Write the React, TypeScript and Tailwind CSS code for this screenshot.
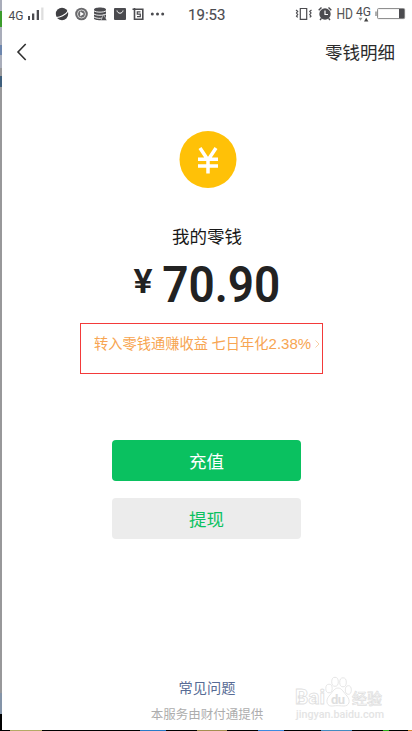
function StatusBar() {
  return (
    <header className="flex h-7 items-center text-[#4b4b4f]">
      <svg className="w-[410px] h-7 shrink-0" viewBox="2 0 410 28" fill="none">
        <text x="8.5" y="20" fontSize="12.500" fill="#4b4b4f" textLength="15" lengthAdjust="spacingAndGlyphs">4G</text>
        <path d="M28 16h2v4h-2zM32 13.500h2.300v6.500H32zM36.700 10h2.300v10h-2.300z" fill="#4b4b4f" />
        <path d="M41.200 7.500h2.300v12.500h-2.300z" fill="#dedede" />

        {/* planet */}
        <circle cx="62" cy="14" r="6.200" fill="#3f3f43" />
        <path d="M55.500 17.500c4 .5 10.500-2.700 13-7" stroke="#fff" strokeWidth="1.100" />
        {/* player */}
        <circle cx="81.500" cy="14" r="6.300" fill="#6a6a6d" />
        <circle cx="81.500" cy="14" r="4" stroke="#ddd" strokeWidth="0.900" />
        <path d="M80.200 11.600v4.600l3.700-2.300z" fill="#fff" />
        {/* database */}
        <path d="M94 9.500c0-2.700 12-2.700 12 0v9c0 2.300-12 2.300-12 0z" fill="#4b4b4f" />
        <path d="M94 10.800c2 1.800 10 1.800 12 0M94 14c2 1.700 10 1.700 12 0M94 17c2 1.500 7 1.600 8 1" stroke="#fff" strokeWidth="0.900" />
        <path d="M103.500 14.500l3.500 6h-6z" fill="#4b4b4f" stroke="#fff" strokeWidth="0.500" />
        {/* shopping bag */}
        <rect x="114" y="8" width="12" height="12" rx="1" fill="#4b4b4f" />
        <path d="M117 10.500c.5 3.600 5.500 3.600 6 0" stroke="#fff" />
        {/* framed S */}
        <path d="M132.500 9.200h10.300v10h-8.300V8" stroke="#4b4b4f" strokeWidth="1.600" />
        <path d="M140.500 11.800h-3.200v2.400h3v2.500h-3.300" stroke="#4b4b4f" strokeWidth="1.200" />
        <g fill="#4b4b4f">
          <circle cx="152.300" cy="14" r="1.500" />
          <circle cx="157.500" cy="14" r="1.500" />
          <circle cx="162.700" cy="14" r="1.500" />
        </g>

        <text x="188" y="20" fontSize="15" fill="#4b4b4f" stroke="#4b4b4f" strokeWidth="0.150" textLength="37.500">19:53</text>

        {/* vibrate */}
        <path d="M300.300 8.500h6.400v10.800h-6.400zM296 10l1.700 1.300-1.200 1.700 1.200 1.500-1.200 1.600 1.200 1.300M311.500 10l-1.700 1.300 1.200 1.700-1.200 1.500 1.200 1.600-1.200 1.300" stroke="#4b4b4f" strokeWidth="1.200" />
        {/* alarm */}
        <circle cx="325" cy="14" r="5.700" fill="#4b4b4f" />
        <path d="M325 10.500v4h3" stroke="#fff" strokeWidth="1.200" />
        <path d="M318.700 10.200l2.800-2.800M331.300 10.200l-2.800-2.800M321.500 18.300l-1.500 1.700M328.500 18.300l1.500 1.700" stroke="#4b4b4f" strokeWidth="1.400" />
        <text x="336.500" y="19" fontSize="15" fill="#555" textLength="16.500" lengthAdjust="spacingAndGlyphs">HD</text>
        <text x="356" y="16.300" fontSize="13" fill="#4b4b4f" textLength="15" lengthAdjust="spacingAndGlyphs">4G</text>
        <path d="M358.500 17.800h4l-2 3z" fill="#999" />
        <path d="M364 21.500h4.400l-2.200-3.700z" fill="#444" />
        {/* battery */}
        <rect x="377.600" y="8.600" width="27" height="10" rx="0.800" stroke="#858585" />
        <path d="M399 9h5.200v9.200H399z" fill="#4b4b4f" />
        <path d="M376 11.500v4.500" stroke="#858585" strokeWidth="1.300" />
      </svg>
    </header>
  );
}

function NavBar() {
  return (
    <nav className="flex h-12 items-center justify-between pl-[14px] pr-[17px] text-[#2b2b2b]">
      <svg className="h-[18px] w-3" viewBox="0 0 12 18" fill="none">
        <path d="M9.700 1L2 9l7.700 8" stroke="#303030" strokeWidth="1.600" />
      </svg>
      <span className="pt-1 text-[17.5px] leading-none">零钱明细</span>
    </nav>
  );
}

function Watermark() {
  return (
    <svg className="absolute bottom-0 right-5 h-14 w-[100px]" viewBox="292 675 100 56" fill="#fff" stroke="#dfdfdf" strokeWidth="0.800">
      <text x="295" y="704" fontSize="19.500" fontWeight="700" textLength="30" lengthAdjust="spacingAndGlyphs">Bai</text>
      <ellipse cx="329" cy="688.500" rx="3.200" ry="4.300" />
      <ellipse cx="335" cy="681.800" rx="3.300" ry="4.500" />
      <ellipse cx="343" cy="682.300" rx="3.300" ry="4.500" />
      <ellipse cx="348.300" cy="690" rx="3" ry="4.300" />
      <path d="M338 688c4 0 6 5 9 8 4 5 2 10-3 10-3 0-8-.8-11 0-6 1-8-5-4-10 3-3 5-8 9-8z" />
      <text x="331" y="703.500" fontSize="13" fontWeight="700" fill="#dedede" stroke="none" textLength="14">du</text>
      <text x="352" y="704" fontSize="15" fontWeight="500" fill="#f7f7f7" strokeWidth="0.700" textLength="30">经验</text>
      <text x="296" y="717.500" fontSize="10" fontWeight="500" fill="#e4e4e4" stroke="none" textLength="88" lengthAdjust="spacingAndGlyphs">jingyan.baidu.com</text>
    </svg>
  );
}

export default function App() {
  return (
    <div className="relative flex h-[731px] w-[412px] overflow-hidden bg-white font-[Roboto,'Noto_Sans_CJK_SC',sans-serif]">
      <aside className="flex w-[2px] shrink-0 flex-col bg-[#98989a]">
        <div className="h-[11px] bg-[#a9adba]" />
        <div className="h-4 bg-[#3c9c2c]" />
        <div className="h-[18px] bg-[#a9adba]" />
        <div className="h-[10px] bg-[#6d86ad]" />
        <div className="h-[13px] bg-[#a9adba]" />
        <div className="mt-2 h-[11px] bg-[#3f5f7c]" />
        <div className="mt-auto h-[21px] bg-[#8494a8]" />
        <div className="h-[17px] bg-black" />
      </aside>

      <div className="flex min-w-0 flex-1 flex-col">
        <StatusBar />
        <NavBar />

        <main className="flex flex-col items-center">
          <svg className="mt-[55px] ml-[2px] size-[58px]" viewBox="0 0 58 58">
            <circle cx="29" cy="28.500" r="28.500" fill="#ffc107" />
            <path d="M21 17l8 12 8-12M19 28.200h20M19 35h20M29 28v14.500" fill="none" stroke="#fff" strokeWidth="3.500" />
          </svg>

          <h1 className="mt-[38px] text-[17.5px] leading-5 text-[#181818]">我的零钱</h1>

          <div className="mt-[12px] ml-[5px] flex h-[53px] items-start text-[#222]">
            <span className="mr-[5px] mt-[5px] origin-center scale-x-[1.05] text-[34px] font-semibold leading-none">¥</span>
            <span className="origin-center scale-x-[0.92] text-[50px] font-semibold leading-[53px]">70.90</span>
          </div>

          <a className="mt-[11px] -ml-[11px] flex h-[51px] w-[243px] items-start border border-[#f33a3a] pl-[13px] pt-[10px] text-[14.25px] leading-5 text-[#f7a552]">
            <span className="whitespace-nowrap">
              转入零钱通赚收益 七日年化
              <span className="font-['Liberation_Sans'] text-[15px]">2.38%</span>
            </span>
            <svg className="ml-[4px] mt-[6px] h-2 w-[5px] shrink-0" viewBox="0 0 5 8" fill="none">
              <path d="M.5.5L4 4 .5 7.500" stroke="#f9cfa4" />
            </svg>
          </a>

          <button className="mt-[66px] -ml-px h-[41px] w-[189px] rounded-[4px] bg-[#0ac160] pt-[3px] text-[17.5px] text-white">充值</button>
          <button className="mt-[17px] -ml-px h-[41px] w-[189px] rounded-[4px] bg-[#ececec] pt-[3px] text-[17.5px] text-[#0ac160]">提现</button>
        </main>

        <footer className="mt-auto flex flex-col items-center">
          <a className="text-[14.2px] leading-5 text-[#576b95]">常见问题</a>
          <p className="mt-[7px] text-[12.5px] leading-5 text-[#adadad]">本服务由财付通提供</p>
          <div className="mt-[5px] flex h-px w-full bg-black">
            <div className="ml-2 w-8 bg-[#b5aa65]" />
            <div className="ml-[98px] w-[26px] bg-[#287bc8]" />
            <div className="ml-[31px] w-[30px] bg-[#a58f50]" />
            <div className="ml-[31px] w-[26px] bg-[#3d8ae0]" />
            <div className="ml-[37px] w-[31px] bg-[#438bc0]" />
            <div className="ml-[31px] w-[6px] bg-[#28b11a]" />
            <div className="ml-[19px] w-[4px] bg-[#d78932]" />
          </div>
        </footer>
      </div>

      <Watermark />
    </div>
  );
}
